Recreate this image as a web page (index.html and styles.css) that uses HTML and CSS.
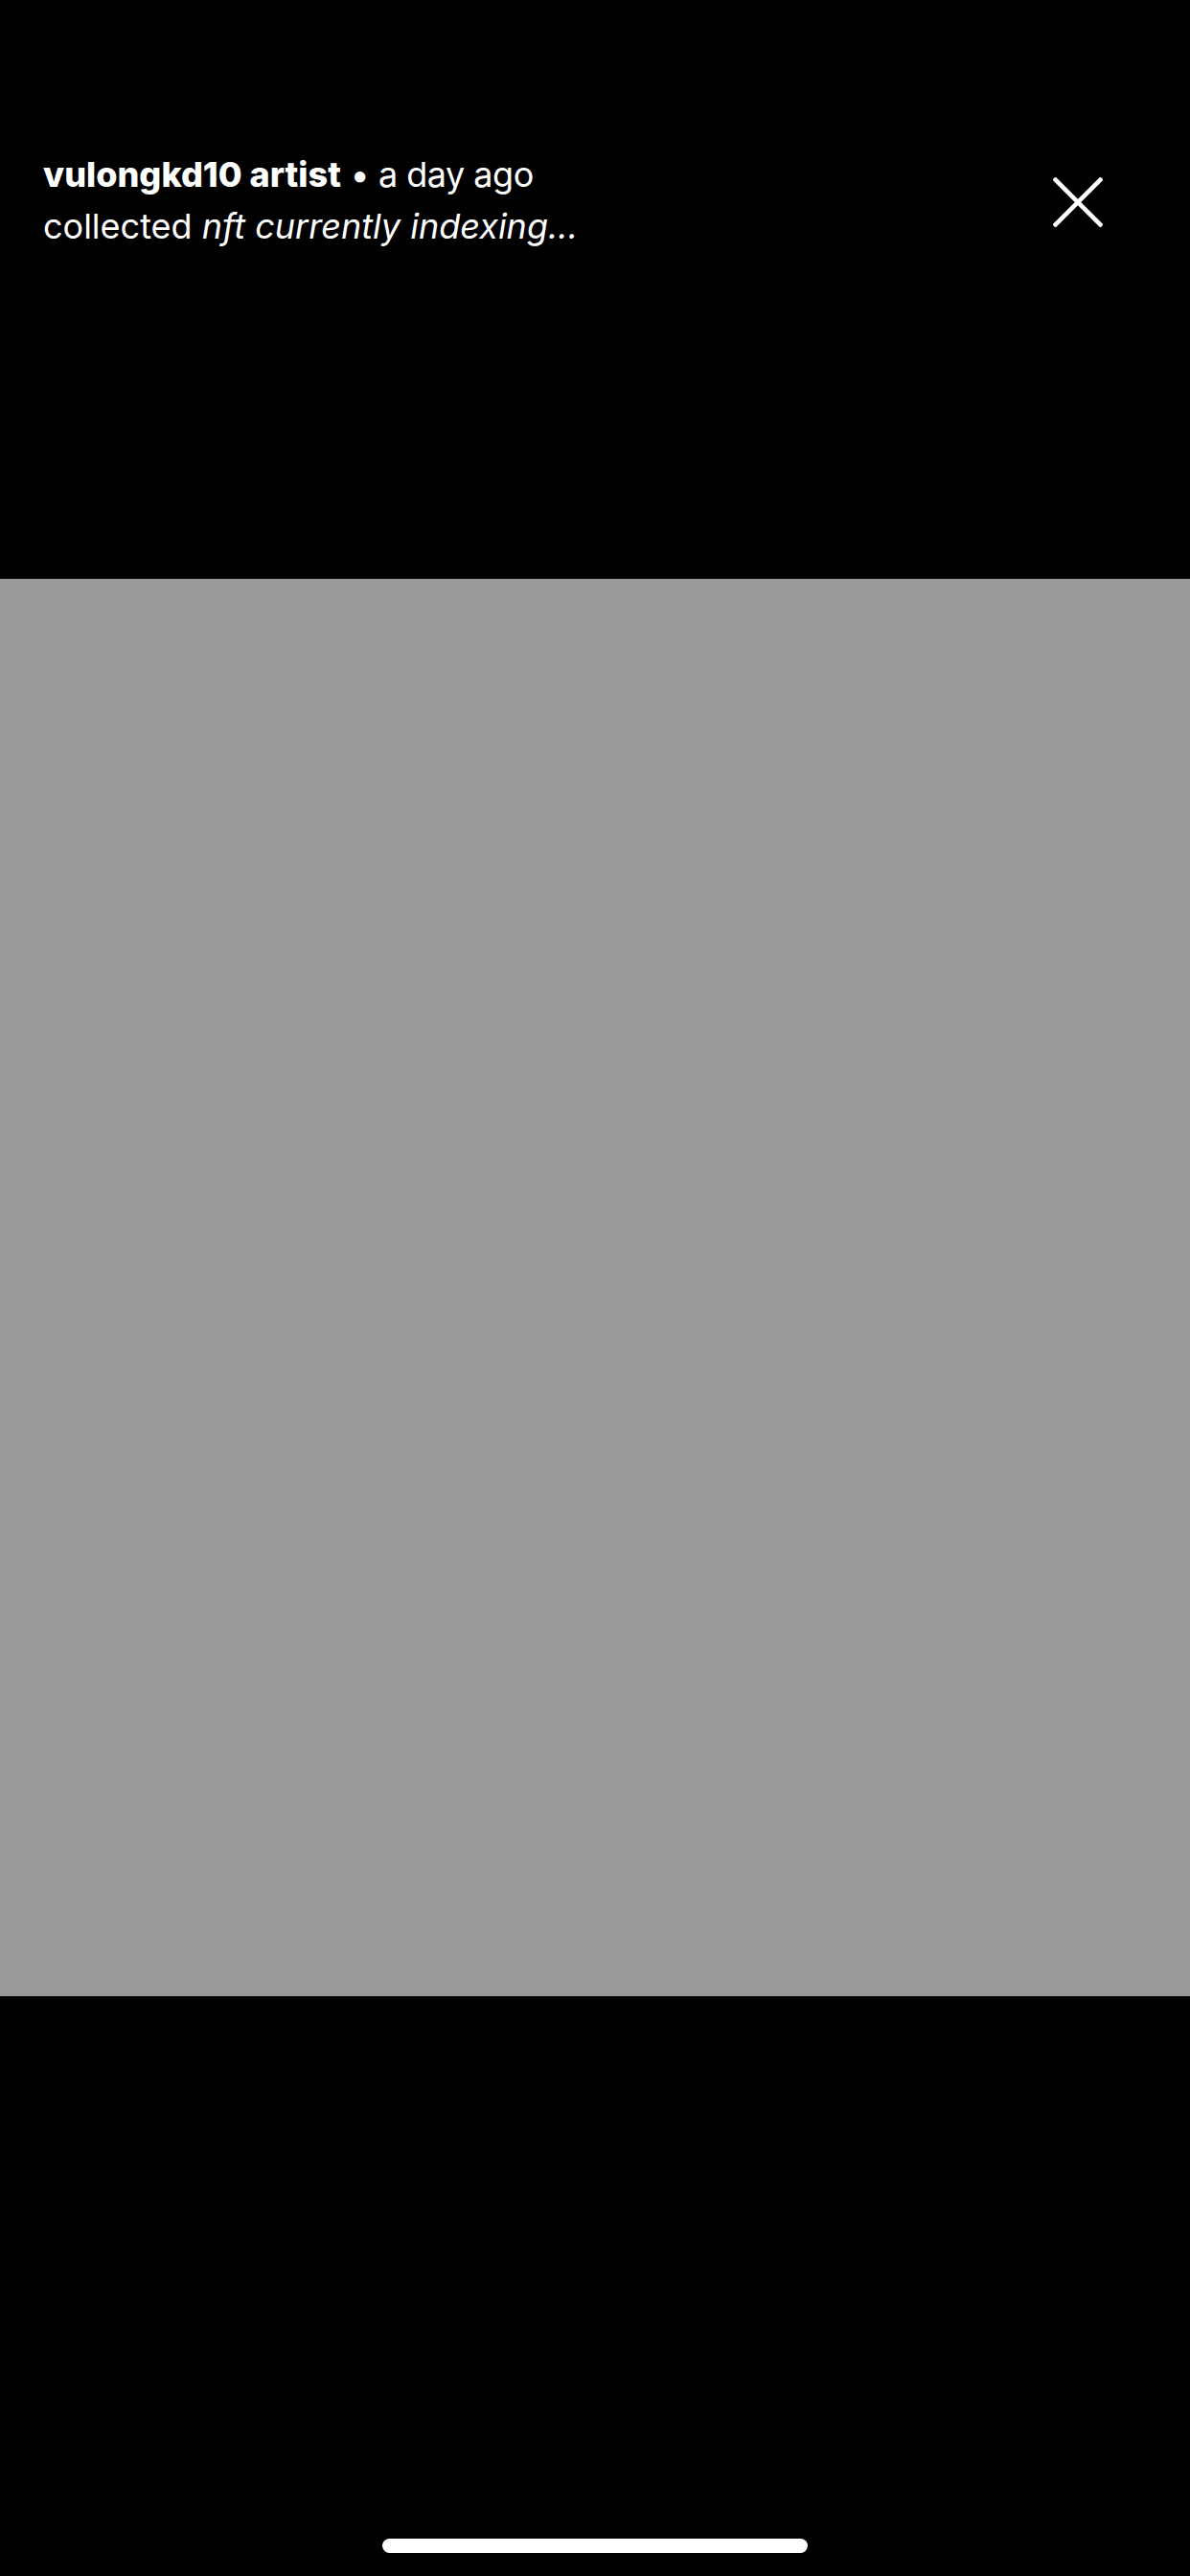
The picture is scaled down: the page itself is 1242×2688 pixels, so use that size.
FILE: index.html
```html
<!DOCTYPE html>
<html lang="en">
<head>
<meta charset="utf-8">
<title>Activity</title>
<link rel="stylesheet" href="styles.css">
</head>
<body>
<div class="screen">
  <header class="header">
    <div class="caption">
      <p class="line"><span class="user">vulongkd10 artist</span><span class="meta"> • a day ago</span></p>
      <p class="line">collected <em class="nft">nft currently indexing...</em></p>
    </div>
    <button class="close" aria-label="Close">
      <svg width="52" height="52" viewBox="0 0 52 52" fill="none" stroke="#fff" stroke-width="4.6">
        <path d="M1 1 L51 51 M51 1 L1 51"/>
      </svg>
    </button>
  </header>
  <main class="media"></main>
  <footer class="footer">
    <div class="home-indicator"></div>
  </footer>
</div>
</body>
</html>
```
FILE: styles.css
```css
html, body {
  margin: 0;
  padding: 0;
  background: #000;
}
.screen {
  width: 1242px;
  height: 2688px;
  display: flex;
  flex-direction: column;
  background: #000;
  font-family: Inter, "Liberation Sans", sans-serif;
  color: #fff;
}
.header {
  height: 604px;
  box-sizing: border-box;
  padding: 155px 91px 0 45px;
  display: flex;
  justify-content: space-between;
  align-items: flex-start;
}
.caption {
  display: flex;
  flex-direction: column;
}
.line {
  margin: 0;
  font-size: 36px;
  line-height: 54px;
  letter-spacing: 0;
}
.user {
  font-weight: 800;
}
.meta {
  letter-spacing: -0.5px;
}
.nft {
  font-style: italic;
}
.close {
  margin-top: 30px;
  padding: 0;
  border: 0;
  background: transparent;
  width: 52px;
  height: 52px;
  display: block;
}
.close svg {
  display: block;
}
.media {
  height: 1479px;
  background: #999;
}
.footer {
  flex: 1;
  display: flex;
  align-items: flex-end;
  justify-content: center;
  padding-bottom: 24px;
}
.home-indicator {
  width: 444px;
  height: 15px;
  border-radius: 8px;
  background: #fff;
}
```
